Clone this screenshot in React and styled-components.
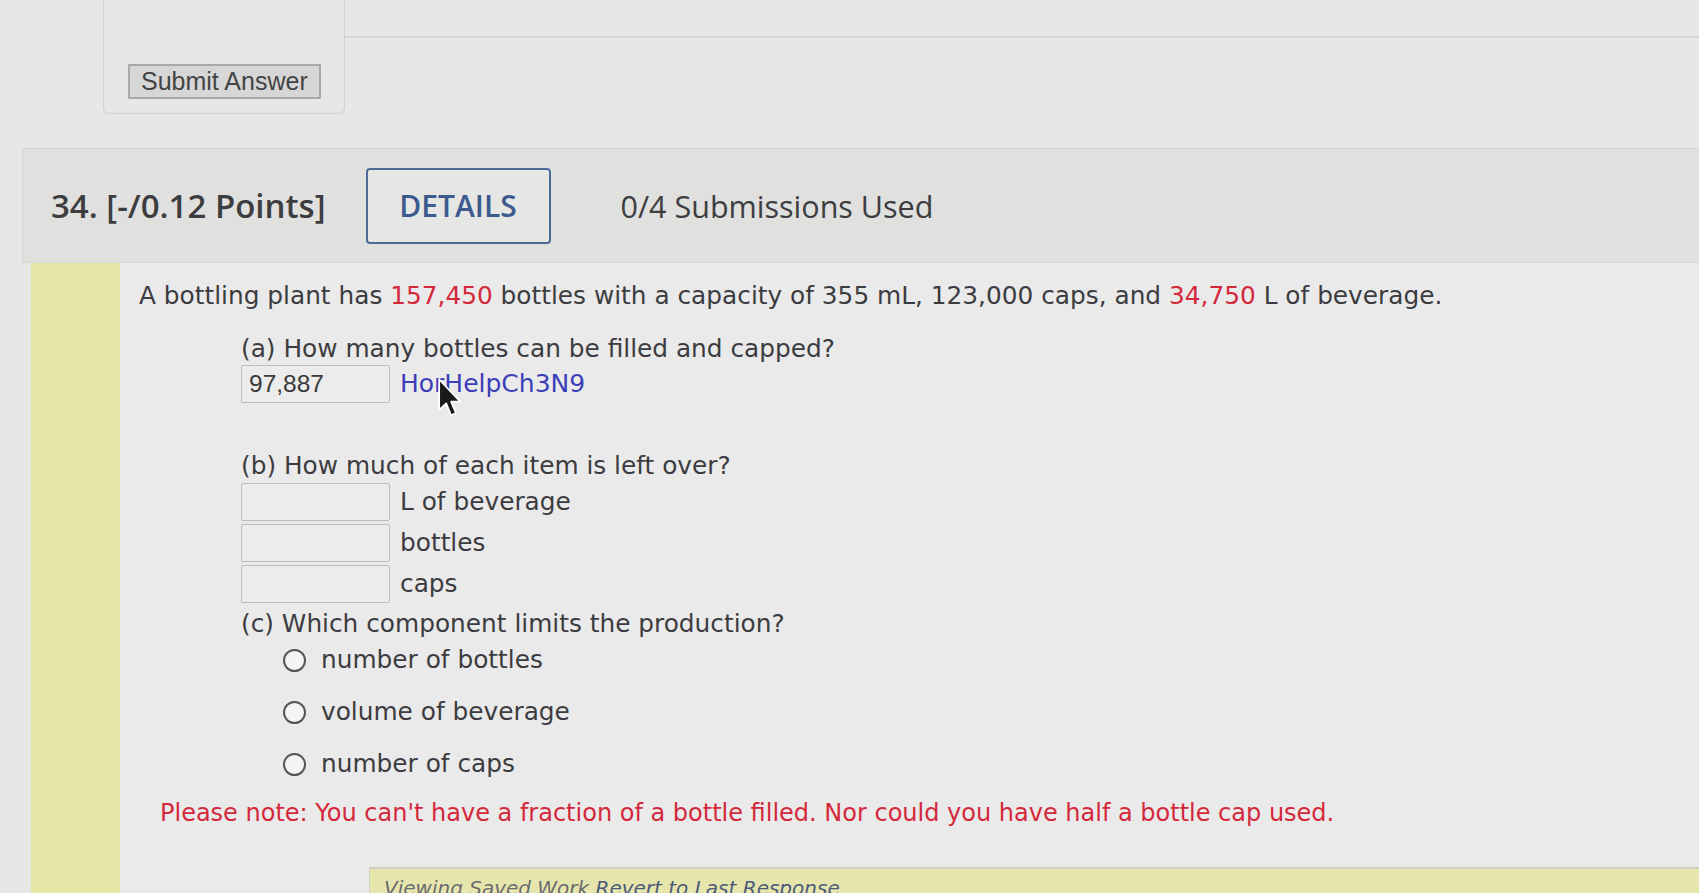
import React from "react";
import styled, { createGlobalStyle } from "styled-components";

const GlobalStyle = createGlobalStyle`
  html, body {
    margin: 0;
    padding: 0;
    background: #e7e7e6;
    overflow: hidden;
  }
  body {
    font-family: "DejaVu Sans", Verdana, sans-serif;
    color: #3c3c40;
  }
`;

function Cursor() {
  return (
    <CursorWrap>
      <svg width="26" height="44" viewBox="0 0 24 40">
        <path
          d="M2 2 L2 30 L8.5 24 L13 35 L17.5 33 L13 22.5 L21.5 22.5 Z"
          fill="#1a1a1a"
          stroke="#ffffff"
          strokeWidth="1.6"
          strokeLinejoin="round"
        />
      </svg>
    </CursorWrap>
  );
}

function App() {
  return (
    <Page>
      <GlobalStyle />
      <TopArea>
        <SubmitPanel>
          <SubmitButton>Submit Answer</SubmitButton>
        </SubmitPanel>
        <TopStrip />
      </TopArea>

      <QuestionHeader>
        <Points>34. [-/0.12 Points]</Points>
        <DetailsButton>DETAILS</DetailsButton>
        <Submissions>0/4 Submissions Used</Submissions>
      </QuestionHeader>

      <QuestionBody>
        <YellowBar />
        <Content>
          <ProblemText>
            A bottling plant has <Red>157,450</Red> bottles with a capacity of
            355 mL, 123,000 caps, and <Red>34,750</Red> L of beverage.
          </ProblemText>

          <Part>
            <PartTitle>(a) How many bottles can be filled and capped?</PartTitle>
            <AnswerRow>
              <AnswerBox>97,887</AnswerBox>
              <HelpLink>
                HorHelpCh3N9
                <Cursor />
              </HelpLink>
            </AnswerRow>
          </Part>

          <Part $top={48}>
            <PartTitle>(b) How much of each item is left over?</PartTitle>
            <Stack>
              <AnswerRow>
                <AnswerBox />
                <Unit>L of beverage</Unit>
              </AnswerRow>
              <AnswerRow>
                <AnswerBox />
                <Unit>bottles</Unit>
              </AnswerRow>
              <AnswerRow>
                <AnswerBox />
                <Unit>caps</Unit>
              </AnswerRow>
            </Stack>
          </Part>

          <Part $top={6}>
            <PartTitle>(c) Which component limits the production?</PartTitle>
            <Options>
              <Option>
                <Radio />
                number of bottles
              </Option>
              <Option>
                <Radio />
                volume of beverage
              </Option>
              <Option>
                <Radio />
                number of caps
              </Option>
            </Options>
          </Part>

          <Note>
            Please note: You can't have a fraction of a bottle filled. Nor could
            you have half a bottle cap used.
          </Note>

          <SavedBox>
            <SavedLabel>Viewing Saved Work</SavedLabel>{" "}
            <SavedLink>Revert to Last Response</SavedLink>
          </SavedBox>
        </Content>
      </QuestionBody>
    </Page>
  );
}

export default App;

const Page = styled.div`
  width: 1699px;
  height: 893px;
  overflow: hidden;
  background: #e7e7e6;
`;

const TopArea = styled.div`
  display: flex;
  height: 148px;
`;

const SubmitPanel = styled.div`
  margin-left: 103px;
  width: 242px;
  height: 114px;
  box-sizing: border-box;
  border: 1px solid #d3d3d2;
  border-top: none;
  border-radius: 0 0 6px 6px;
  padding: 64px 0 0 24px;
`;

const TopStrip = styled.div`
  flex: 1;
  margin-top: 36px;
  border-top: 2px solid #d6d6d5;
`;

const SubmitButton = styled.button`
  font-family: "Liberation Sans", Arial, sans-serif;
  font-size: 25px;
  color: #444;
  background: #d6d6d6;
  border: 2px solid #a9a9a9;
  border-radius: 1px;
  height: 35px;
  padding: 0 11px;
  line-height: 29px;
`;

const QuestionHeader = styled.div`
  margin-left: 22px;
  height: 115px;
  box-sizing: border-box;
  background: #e0e0df;
  border-top: 1px solid #d4d4d3;
  border-left: 1px solid #d4d4d3;
  border-bottom: 1px solid #d9d9d8;
  display: flex;
  align-items: center;
  padding-left: 28px;
  font-family: "Open Sans", sans-serif;
`;

const Points = styled.span`
  font-size: 33px;
  font-weight: 600;
  color: #3d3d40;
`;

const DetailsButton = styled.span`
  margin-left: 40px;
  width: 185px;
  height: 76px;
  box-sizing: border-box;
  border: 2px solid #4e6b98;
  border-radius: 4px;
  background: #e6e6e5;
  display: flex;
  align-items: center;
  justify-content: center;
  font-size: 30px;
  font-weight: 600;
  color: #3b5a8e;
`;

const Submissions = styled.span`
  margin-left: 70px;
  font-size: 30.5px;
  color: #3d3d40;
`;

const QuestionBody = styled.div`
  display: flex;
  margin-left: 31px;
  height: 630px;
`;

const YellowBar = styled.div`
  width: 89px;
  background: #e6e6a7;
`;

const Content = styled.div`
  flex: 1;
  background: #eaeaea;
  padding: 18px 0 0 19px;
  font-size: 24.8px;
  line-height: 30px;
`;

const ProblemText = styled.div`
  white-space: nowrap;
`;

const Red = styled.span`
  color: #d4283b;
`;

const Part = styled.div`
  margin-left: 102px;
  margin-top: ${(p) => (p.$top != null ? p.$top : 23)}px;
`;

const PartTitle = styled.div`
  white-space: nowrap;
  margin-bottom: 1px;
`;

const Stack = styled.div`
  display: flex;
  flex-direction: column;
  gap: 2px;
`;

const AnswerRow = styled.div`
  display: flex;
  align-items: center;
  margin-top: 1px;
`;

const AnswerBox = styled.div`
  width: 149px;
  height: 38px;
  box-sizing: border-box;
  border: 1px solid #bdbdbd;
  border-radius: 2px;
  background: #ececec;
  font-family: "Liberation Sans", Arial, sans-serif;
  font-size: 24.5px;
  color: #3a3a3a;
  padding: 4px 7px;
  line-height: 28px;
`;

const HelpLink = styled.span`
  position: relative;
  margin-left: 10px;
  font-size: 25px;
  color: #3b3eb8;
`;

const CursorWrap = styled.span`
  position: absolute;
  left: 37px;
  top: 8px;
  line-height: 0;
`;

const Unit = styled.span`
  margin-left: 10px;
`;

const Options = styled.div`
  margin-left: 42px;
  display: flex;
  flex-direction: column;
  gap: 12px;
`;

const Option = styled.div`
  display: flex;
  align-items: center;
  height: 40px;
`;

const Radio = styled.span`
  width: 19px;
  height: 19px;
  border: 2px solid #555;
  border-radius: 50%;
  background: #f4f4f4;
  margin-right: 15px;
`;

const Note = styled.div`
  margin: 14px 0 0 21px;
  color: #d4283b;
  white-space: nowrap;
  font-size: 24px;
`;

const SavedBox = styled.div`
  margin: 39px 0 0 230px;
  height: 60px;
  background: #e6e6ac;
  border-top: 2px solid #cfcfc4;
  border-left: 1px solid #cfcfc4;
  padding: 4px 14px;
  font-style: italic;
  font-size: 20px;
`;

const SavedLabel = styled.span`
  color: #6b6b70;
`;

const SavedLink = styled.span`
  color: #4c5a7a;
`;
